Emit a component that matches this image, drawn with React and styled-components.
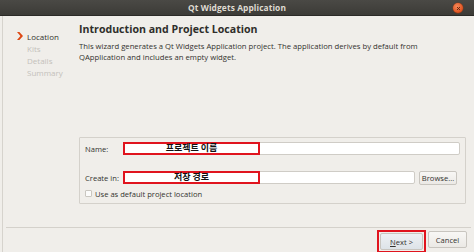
import React from "react";
import styled, { createGlobalStyle } from "styled-components";

const Global = createGlobalStyle`
  html, body { margin: 0; padding: 0; background: #f0eeea; }
  body { width: 474px; height: 252px; overflow: hidden; font-family: "Open Sans", "DejaVu Sans", sans-serif; color: #3c3b37; }
  #root { width: 474px; height: 252px; }
`;

const Window = styled.div`
  width: 474px;
  height: 252px;
  display: flex;
  flex-direction: column;
  background: #f0eeea;
`;

const TitleBar = styled.div`
  height: 16px;
  flex: none;
  display: flex;
  align-items: center;
  justify-content: center;
  position: relative;
  background: linear-gradient(#4a4945, #3c3b37);
  border-bottom: 1px solid #2b2a27;
  box-sizing: border-box;
`;

const Title = styled.span`
  font-size: 8.4px;
  font-weight: 700;
  color: #dfdbd2;
  letter-spacing: 0.1px;
`;

const CloseBtn = styled.div`
  position: absolute;
  right: 11px;
  top: 3px;
  width: 10px;
  height: 10px;
  border-radius: 50%;
  background: radial-gradient(circle at 40% 35%, #f58a5c, #e0501c 70%);
  box-shadow: 0 0 0 0.5px #8a3a1a;
  display: flex;
  align-items: center;
  justify-content: center;
`;

const Body = styled.div`
  flex: 1;
  display: flex;
  flex-direction: column;
  margin-left: 2px;
  border-left: 1px solid #d6d3cd;
  min-height: 0;
`;

const Content = styled.div`
  flex: 1;
  display: flex;
  min-height: 0;
`;

const Sidebar = styled.div`
  width: 76px;
  flex: none;
  padding-top: 14px;
  padding-left: 14px;
  box-sizing: border-box;
  display: flex;
  flex-direction: column;
`;

const Step = styled.div`
  display: flex;
  align-items: center;
  height: 12px;
  font-size: 8px;
  color: ${(p) => (p.$active ? "#33322e" : "#c4c1bb")};
`;

const Marker = styled.span`
  width: 10px;
  flex: none;
  display: flex;
  align-items: center;
`;

const Main = styled.div`
  flex: 1;
  display: flex;
  flex-direction: column;
  padding: 6px 8px 23px 0;
  min-width: 0;
`;

const Heading = styled.h1`
  margin: 0;
  font-size: 10.6px;
  line-height: 14px;
  font-weight: 700;
  color: #2f2e2b;
`;

const Description = styled.p`
  margin: 5px 0 0;
  font-size: 7.7px;
  line-height: 11px;
  color: #33322e;
`;

const Group = styled.div`
  margin-top: auto;
  height: 67px;
  box-sizing: border-box;
  border: 1px solid #d4d1cb;
  border-radius: 1px;
  padding: 4px 5px 0 5px;
  display: flex;
  flex-direction: column;
`;

const Line = styled.div`
  display: flex;
  align-items: center;
  height: ${(p) => p.$h}px;
  margin-top: ${(p) => p.$top || 0}px;
  padding-right: ${(p) => p.$pad || 0}px;
  gap: 4px;
`;

const Label = styled.span`
  width: 34px;
  flex: none;
  font-size: 7.6px;
  color: #33322e;
  white-space: nowrap;
`;

const Input = styled.div`
  flex: 1;
  height: 13px;
  box-sizing: border-box;
  background: #ffffff;
  border: 1px solid #cfccc6;
  border-radius: 2px;
  display: flex;
  align-items: center;
`;

const Highlight = styled.div`
  width: 137px;
  height: 13px;
  margin: -1px 0 0 -1px;
  box-sizing: border-box;
  border: 2px solid #e0141e;
  padding-bottom: 1px;
  display: flex;
  align-items: center;
  justify-content: center;
  font-family: "Noto Sans CJK KR", "Noto Sans", sans-serif;
  font-weight: 700;
  font-size: 9px;
  color: #111;
  line-height: 1;
`;

const Button = styled.button`
  height: ${(p) => p.$h || 17}px;
  width: ${(p) => p.$w}px;
  flex: none;
  box-sizing: border-box;
  padding: 0;
  font-family: inherit;
  font-size: 7.6px;
  color: #33322e;
  border: 1px solid #c8c5bf;
  border-radius: 2px;
  background: ${(p) => (p.$default ? "linear-gradient(#eef1f3, #dde3e8)" : "linear-gradient(#f8f7f5, #ebe9e5)")};
  display: flex;
  align-items: center;
  justify-content: center;
`;

const RedMark = styled.span`
  display: flex;
  padding: 1px;
  border: 2px solid #e0141e;
`;

const CheckRow = styled.label`
  display: flex;
  align-items: center;
  gap: 3px;
  font-size: 7.6px;
  color: #33322e;
`;

const Box = styled.span`
  width: 7px;
  height: 7px;
  box-sizing: border-box;
  background: #fbfbfa;
  border: 1px solid #c9c6c0;
  border-radius: 1px;
`;

const Separator = styled.div`
  height: 1px;
  flex: none;
  margin: 0 3px 0 3px;
  background: #d4d1cb;
`;

const Footer = styled.div`
  height: 24px;
  flex: none;
  display: flex;
  justify-content: flex-end;
  align-items: flex-start;
  gap: 2px;
  padding: 2px 7px 0 0;
  box-sizing: border-box;
`;

const CancelSlot = styled.div`
  padding-top: 1px;
`;

const Underline = styled.span`
  text-decoration: underline;
`;

const Chevron = () => (
  <svg width="6" height="8" viewBox="0 0 6 8">
    <polygon points="0,0 2.4,0 6,4 2.4,8 0,8 3.4,4" fill="#dd4814" />
  </svg>
);

const steps = ["Location", "Kits", "Details", "Summary"];

export default function App() {
  return (
    <>
      <Global />
      <Window>
        <TitleBar>
          <Title>Qt Widgets Application</Title>
          <CloseBtn>
            <svg width="5" height="5" viewBox="0 0 5 5">
              <path d="M1 1 L4 4 M4 1 L1 4" stroke="#5a2310" strokeWidth="0.9" />
            </svg>
          </CloseBtn>
        </TitleBar>
        <Body>
          <Content>
            <Sidebar>
              {steps.map((s, i) => (
                <Step key={s} $active={i === 0}>
                  <Marker>{i === 0 && <Chevron />}</Marker>
                  {s}
                </Step>
              ))}
            </Sidebar>
            <Main>
              <Heading>Introduction and Project Location</Heading>
              <Description>
                This wizard generates a Qt Widgets Application project. The application derives by default from
                <br />
                QApplication and includes an empty widget.
              </Description>
              <Group>
                <Line $h={13}>
                  <Label>Name:</Label>
                  <Input>
                    <Highlight>프로젝트 이름</Highlight>
                  </Input>
                </Line>
                <Line $h={13} $top={16} $pad={3}>
                  <Label>Create in:</Label>
                  <Input>
                    <Highlight>저장 경로</Highlight>
                  </Input>
                  <Button $w={38} $h={14}>Browse...</Button>
                </Line>
                <Line $h={11} $top={4}>
                  <CheckRow>
                    <Box />
                    Use as default project location
                  </CheckRow>
                </Line>
              </Group>
            </Main>
          </Content>
          <Separator />
          <Footer>
            <RedMark>
              <Button $w={43} $default>
                <Underline>N</Underline>ext &gt;
              </Button>
            </RedMark>
            <CancelSlot>
              <Button $w={39}>Cancel</Button>
            </CancelSlot>
          </Footer>
        </Body>
      </Window>
    </>
  );
}
